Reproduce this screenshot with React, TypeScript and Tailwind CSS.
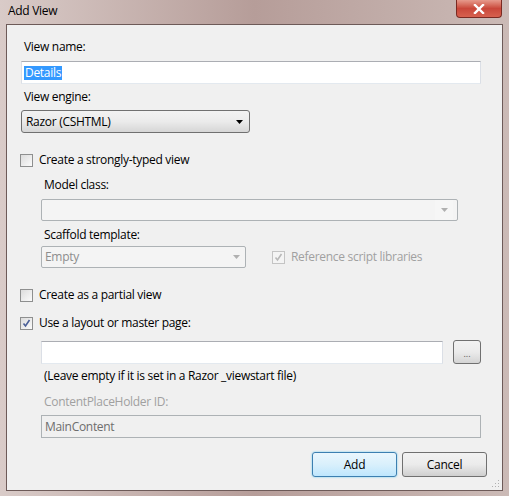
import React from "react";

const font = { fontFamily: '"Open Sans", "Noto Sans", "Liberation Sans", sans-serif' };

function Arrow({ disabled }: { disabled?: boolean }) {
  return (
    <svg width="7" height="4" viewBox="0 0 7 4" className="shrink-0">
      <path d="M0 0h7L3.5 4z" fill={disabled ? "#b0b0b0" : "#000"} />
    </svg>
  );
}

function Check({ checked, disabled }: { checked?: boolean; disabled?: boolean }) {
  return (
    <span
      className={`w-[13px] h-[13px] shrink-0 border flex items-center justify-center ${
        disabled ? "border-[#c4c4c4] bg-[#f4f4f4]" : "border-[#8e8f8f] bg-gradient-to-br from-[#dcdcdc] to-[#fbfbfb]"
      }`}
    >
      {checked && (
        <svg width="9" height="9" viewBox="0 0 9 9">
          <path
            d="M1.5 4.5l2 2.5 4-6"
            fill="none"
            stroke={disabled ? "#b8b8b8" : "#4a5f97"}
            strokeWidth="1.6"
          />
        </svg>
      )}
    </span>
  );
}

function Label({ children, gray, className = "" }: { children: React.ReactNode; gray?: boolean; className?: string }) {
  return (
    <div className={`h-4 leading-4 text-[12px] tracking-[-0.3px] ${gray ? "text-[#a0a0a0]" : "text-black"} ${className}`}>
      {children}
    </div>
  );
}

export default function App() {
  return (
    <div
      className="w-[509px] h-[496px] relative overflow-hidden bg-gradient-to-r from-[#d9cbc8] via-[#b69d99] to-[#cbbab6] flex flex-col"
      style={font}
    >
      {/* title bar */}
      <div className="h-6 shrink-0 flex items-start">
        <span className="ml-2 mt-[3px] text-[12px] leading-4 text-black tracking-[-0.3px]">Add View</span>
        <div className="ml-auto mr-[7px] w-[46px] h-[18px] rounded-b-[4px] border border-t-0 border-[#7a2a22] bg-gradient-to-b from-[#e69a8c] via-[#c9473a] to-[#d7614f] flex items-center justify-center">
          <svg width="12" height="10" viewBox="0 0 12 10">
            <path d="M2 1l8 8M10 1L2 9" stroke="#fff" strokeWidth="2.4" strokeLinecap="square" />
          </svg>
        </div>
      </div>

      {/* client area */}
      <div className="mx-[6px] h-[467px] border border-[#6d5a58] bg-[#f0f0f0] pl-[14px] pt-[14px] relative">
        <Label className="ml-[3px]">View name:</Label>
        <div className="mt-[6px] w-[460px] h-[23px] bg-white border border-[#abadb3] border-b-[#e3e9ef] border-x-[#dbdfe6] flex items-center pl-[2px]">
          <span className="bg-[#3399ff] text-white text-[12px] leading-[14px] px-[1px] tracking-[-0.3px]">Details</span>
        </div>

        <Label className="ml-[3px] mt-[5px]">View engine:</Label>
        <div className="mt-[5px] w-[229px] h-[23px] rounded-[3px] border border-[#707070] bg-gradient-to-b from-[#f2f2f2] via-[#ebebeb] to-[#d6d6d6] flex items-center px-[4px] justify-between">
          <span className="text-[12px] tracking-[-0.3px]">Razor (CSHTML)</span>
          <span className="mr-[2px]"><Arrow /></span>
        </div>

        <div className="mt-[19px] h-4 flex items-center gap-[6px] -ml-px">
          <Check />
          <Label>Create a strongly-typed view</Label>
        </div>

        <div className="ml-[20px]">
          <Label className="mt-[9px] ml-[3px]">Model class:</Label>
          <div className="mt-[6px] w-[417px] h-[22px] rounded-[2px] border border-[#adb2b5] bg-[#f4f4f4] flex items-center justify-end pr-[4px]">
            <span className="h-full w-[18px] flex items-center justify-center bg-[#f6f6f6]"><Arrow disabled /></span>
          </div>

          <Label className="mt-[6px] ml-[3px]">Scaffold template:</Label>
          <div className="mt-[3px] flex items-center">
            <div className="w-[205px] h-[22px] rounded-[2px] border border-[#adb2b5] bg-[#f4f4f4] flex items-center justify-between px-[3px]">
              <span className="text-[12px] text-[#8d8d8d] tracking-[-0.3px]">Empty</span>
              <span className="mr-[2px]"><Arrow disabled /></span>
            </div>
            <div className="ml-[26px] flex items-center gap-[6px]">
              <Check checked disabled />
              <Label gray>Reference script libraries</Label>
            </div>
          </div>
        </div>

        <div className="mt-[19px] h-4 flex items-center gap-[6px] -ml-px">
          <Check />
          <Label>Create as a partial view</Label>
        </div>

        <div className="mt-[12px] h-4 flex items-center gap-[6px] -ml-px">
          <Check checked />
          <Label>Use a layout or master page:</Label>
        </div>

        <div className="ml-[20px]">
          <div className="mt-[9px] flex items-center">
            <div className="w-[402px] h-[23px] bg-white border border-[#abadb3] border-b-[#e3e9ef] border-x-[#dbdfe6]" />
            <div className="ml-[10px] w-[28px] h-[24px] rounded-[3px] border border-[#707070] bg-gradient-to-b from-[#f2f2f2] via-[#ebebeb] to-[#d4d4d4] flex items-end justify-center pb-[6px]">
              <span className="text-[9px] leading-[6px] text-[#555]">...</span>
            </div>
          </div>
          <Label className="mt-[4px] ml-[3px]">(Leave empty if it is set in a Razor _viewstart file)</Label>

          <Label gray className="mt-[10px] ml-[3px]">ContentPlaceHolder ID:</Label>
          <div className="mt-[5px] w-[440px] h-[23px] border border-[#adb2b5] bg-[#f0f0f0] flex items-center pl-[3px]">
            <span className="text-[12px] text-[#6d6d6d] tracking-[-0.3px]">MainContent</span>
          </div>
        </div>

        <div className="mt-[14px] flex justify-end gap-[5px] pr-[15px]">
          <button className="w-[85px] h-[25px] rounded-[3px] border border-[#3c7fb1] bg-gradient-to-b from-[#eaf6fd] via-[#d9f0fc] to-[#bee6fd] shadow-[0_0_2px_#5cc8f0] text-[12px] tracking-[-0.3px]">
            Add
          </button>
          <button className="w-[85px] h-[25px] rounded-[3px] border border-[#707070] bg-gradient-to-b from-[#f2f2f2] via-[#ebebeb] to-[#cfcfcf] text-[12px] tracking-[-0.3px]">
            Cancel
          </button>
        </div>

        {/* resize grip */}
        <svg width="10" height="10" viewBox="0 0 10 10" className="absolute right-[2px] bottom-[2px]">
          {[
            [8, 2], [8, 5], [5, 5], [8, 8], [5, 8], [2, 8],
          ].map(([x, y]) => (
            <rect key={`${x}-${y}`} x={x} y={y} width="1" height="1" fill="#b0b0b0" />
          ))}
        </svg>
      </div>
    </div>
  );
}
